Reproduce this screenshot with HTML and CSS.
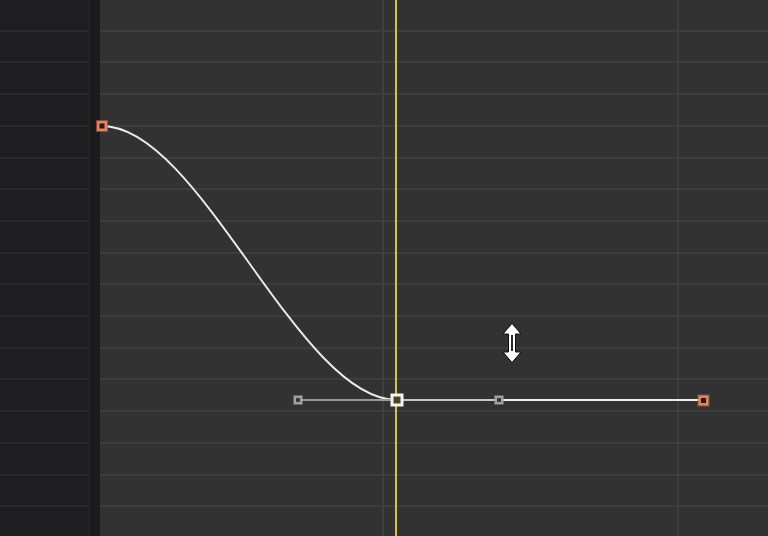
FILE: index.html
```html
<!DOCTYPE html>
<html lang="en">

<head>
    <meta charset="UTF-8">
    <meta name="viewport" content="width=device-width, initial-scale=1.0">
    <title>Curve Editor</title>
    <link rel="stylesheet" href="styles.css">
</head>

<body>
    <div class="editor">
        <div class="gutter"></div>
        <div class="graph"></div>

        <!-- curve, playhead and keys drawn over the grid -->
        <svg class="overlay" width="768" height="536" viewBox="0 0 768 536">
            <defs>
                <filter id="glow" x="-5" y="0" width="11" height="1">
                    <feGaussianBlur stdDeviation="1.4" />
                </filter>
                <filter id="soft" x="-0.1" y="-0.1" width="1.2" height="1.2">
                    <feGaussianBlur stdDeviation="0.45" />
                </filter>
            </defs>

            <line x1="396" y1="0" x2="396" y2="536" stroke="#9c8f28" stroke-width="5" filter="url(#glow)" opacity="0.75" />
            <line x1="396" y1="0" x2="396" y2="536" stroke="#d6c43c" stroke-width="2" />

            <g filter="url(#soft)">
                <path d="M102,126 C200,126 298,400 397,400 L703,400" fill="none" stroke="#ececec" stroke-width="1.9" />
                <line x1="298" y1="400" x2="397" y2="400" stroke="#9a9a9a" stroke-width="1.8" />
                <line x1="397" y1="400" x2="499" y2="400" stroke="#c8c8c8" stroke-width="1.8" />

                <rect x="293.5" y="395.5" width="9" height="9" fill="#a0a0a0" />
                <rect x="296" y="398" width="4" height="4" fill="#3a3a3a" />
                <rect x="494.5" y="395.5" width="9" height="9" fill="#a0a0a0" />
                <rect x="497" y="398" width="4" height="4" fill="#3a3a3a" />

                <rect x="390.5" y="393.5" width="13" height="13" fill="#f4f4ee" />
                <rect x="393.5" y="396.5" width="7" height="7" fill="#4a4420" />

                <rect x="96" y="120" width="12" height="12" fill="#c8613f" opacity="0.6" />
                <rect x="97" y="121" width="10" height="10" fill="#e68262" />
                <rect x="99.5" y="123.5" width="5" height="5" fill="#2a1a16" />
                <rect x="697.5" y="394.5" width="12" height="12" fill="#c8613f" opacity="0.6" />
                <rect x="698.5" y="395.5" width="10" height="10" fill="#e68262" />
                <rect x="701" y="398" width="5" height="5" fill="#2a1a16" />

                <path d="M512,323.5 L521,334 L515.5,334 L515.5,352 L521,352 L512,362.5 L503,352 L508.5,352 L508.5,334 L503,334 Z" fill="#ffffff" stroke="#111111" stroke-width="1" />
                <line x1="512" y1="335" x2="512" y2="351" stroke="#2a2a2a" stroke-width="2" />
            </g>
        </svg>
    </div>
</body>

</html>
```

FILE: styles.css
```css
* {
    margin: 0px;
    padding: 0px;
    box-sizing: border-box;
}

body {
    background: #333333;
    overflow: hidden;
}

.editor {
    position: relative;
    display: flex;
    width: 768px;
    height: 536px;
}

.gutter {
    width: 100px;
    height: 100%;
    background-color: #1e1d20;
    background-image:
        linear-gradient(to right, transparent 0px, transparent 88px, #232225 88px, #232225 90px, #1b1a1d 90px, #1b1a1d 100px),
        repeating-linear-gradient(to bottom, transparent 0px, transparent 29.7px, #29282b 29.7px, #29282b 31.7px);
}

.graph {
    flex: 1;
    height: 100%;
    background-color: #323232;
    background-image:
        repeating-linear-gradient(to right, transparent 0px, transparent 282px, #3f3f40 282px, #3f3f40 284px, transparent 284px, transparent 295px),
        repeating-linear-gradient(to bottom, transparent 0px, transparent 29.7px, #3d3d3e 29.7px, #3d3d3e 31.7px);
}

.overlay {
    position: absolute;
    left: 0px;
    top: 0px;
}
```
